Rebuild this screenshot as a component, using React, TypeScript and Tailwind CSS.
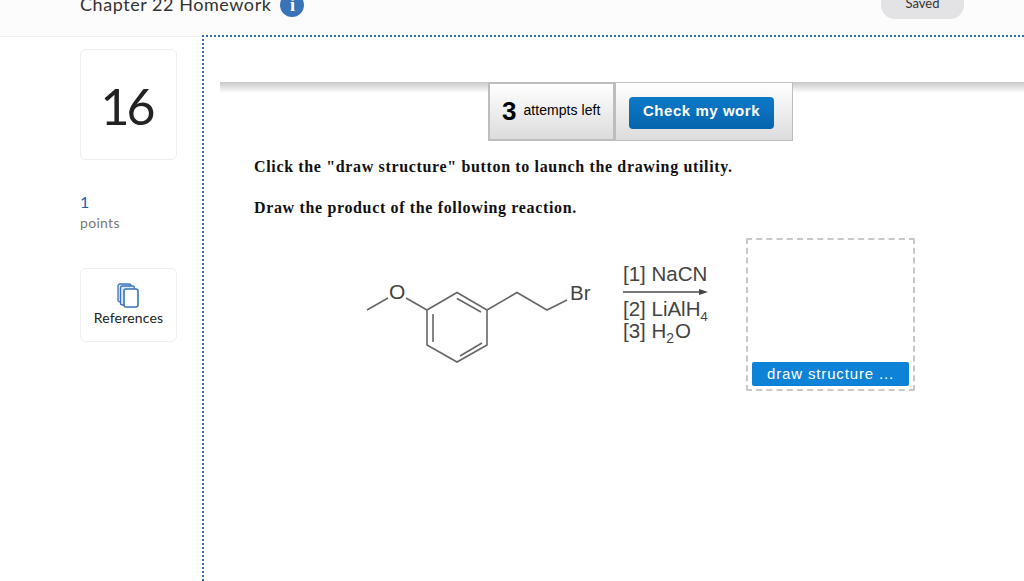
const sans = 'font-["Lato",sans-serif]';

function Scheme() {
  return (
    <svg width="360" height="160" viewBox="360 238 360 160" className="shrink-0" fontFamily="'Liberation Sans', Arial, sans-serif">
      <g fill="none" stroke="#666" strokeWidth="1.6">
        <path d="M367 310 L388 298" />
        <path d="M406 298 L427 310 L457 292.500 L487 310 L487 345 L457 362 L427 345 L427 310" />
        <path d="M487 310 L517 292.500 L547 310 L567 300" />
        <path d="M433 314 L433 342 M457 298.500 L481 312 M460 356 L482 343" />
      </g>
      <text x="389" y="299" fontSize="21" fill="#444">O</text>
      <text x="570" y="300" fontSize="20.500" fill="#444">Br</text>
      <g fontSize="20.500" fill="#444">
        <text x="623" y="281">[1] NaCN</text>
        <text x="623" y="316">[2] LiAlH<tspan fontSize="13" dy="5">4</tspan></text>
        <text x="623" y="338">[3] H<tspan fontSize="14" dy="5">2</tspan><tspan dx="1" dy="-5">O</tspan></text>
      </g>
      <path d="M623 292 L703 292" stroke="#777" strokeWidth="2" />
      <path d="M699 289 L708 292 L699 295 Z" fill="#444" />
    </svg>
  );
}

export default function App() {
  return (
    <div className="w-[1024px] h-[581px] overflow-hidden bg-white flex flex-col">
      {/* ---------- Header ---------- */}
      <header className="h-[37px] shrink-0 bg-[#fcfcfc] flex items-start justify-between pl-[80px] pr-[60px]">
        <div className="flex items-center gap-[9px] -mt-[7px]">
          <span className={`${sans} -mt-[2px] text-[18px] leading-[24px] text-[#333] tracking-[0.55px]`}>Chapter 22 Homework</span>
          <span className="w-[24px] h-[24px] rounded-full bg-[#3a74b8] text-white flex items-center justify-center font-['Liberation_Serif',serif] font-bold text-[18px] leading-none">i</span>
        </div>
        <div className="w-[83px] h-[19px] bg-[#e3e2e4] rounded-b-[14px] flex justify-center items-end pb-[8px]">
          <span className={`${sans} text-[13px] leading-[16px] text-[#333]`}>Saved</span>
        </div>
      </header>

      <div className="flex flex-1 min-h-0">
        {/* ---------- Sidebar ---------- */}
        <aside className="w-[202px] shrink-0 pl-[80px] pt-[12px] -mt-[1px] border-t border-[#eeeeee]">
          <div className="w-[97px] h-[111px] border border-[#eeeeee] rounded-[6px] flex items-center justify-center pr-[4px] pt-[2px]">
            <span className={`${sans} text-[50px] leading-none text-[#222] tracking-[-3px]`}>16</span>
          </div>
          <p className={`${sans} mt-[32px] text-[16px] leading-[20px] text-[#1d5fae]`}>1</p>
          <p className={`${sans} text-[14px] leading-[21px] text-[#777] tracking-[0.3px]`}>points</p>
          <div className="mt-[35px] w-[97px] h-[74px] border border-[#eeeeee] rounded-[6px] flex flex-col items-center pt-[14px]">
            <svg width="24" height="26" viewBox="0 0 24 26" fill="none" stroke="#3a74b8" strokeWidth="1.3">
              <rect x="1" y="1" width="13" height="18" rx="2" fill="#dce7f4" />
              <rect x="3.500" y="3" width="14" height="19" rx="2" fill="#dce7f4" />
              <rect x="7" y="6" width="14" height="18" rx="2" fill="#fff" strokeWidth="1.6" />
            </svg>
            <span className={`${sans} text-[14px] leading-[18px] text-[#222] tracking-[0.2px]`}>References</span>
          </div>
        </aside>

        {/* ---------- Question ---------- */}
        <main className="flex-1 min-w-0 border-l-2 border-t-2 border-dotted border-[#2f6db5] -mt-[2px] pl-[16px] pt-[45px]">
          <div className="flex pl-[268px] bg-[linear-gradient(#c8c8c8,#ffffff)] bg-no-repeat bg-[length:100%_11px]">
            <div className="w-[127px] h-[59px] border-2 border-[#bdbdbd] bg-[linear-gradient(#ffffff,#dcdcdc)] flex items-center pl-[12px] pb-[2px] gap-[7px] font-['Liberation_Sans',sans-serif] text-black">
              <span className="text-[26px] font-bold leading-none">3</span>
              <span className="text-[14px] tracking-[0.05px]">attempts left</span>
            </div>
            <div className="w-[178px] h-[59px] border border-[#bdbdbd] bg-[linear-gradient(#ffffff,#dcdcdc)] flex items-center pl-[13px] pt-[2px]">
              <button className="w-[145px] h-[32px] pb-[2px] rounded-[4px] bg-[linear-gradient(#0c79c8,#0565ac)] text-white text-[15px] font-semibold font-['Liberation_Sans',sans-serif] tracking-[0.55px]">
                Check my work
              </button>
            </div>
          </div>

          <div className="pl-[34px] font-['Liberation_Serif',serif] font-bold text-[16px] leading-[20px] text-[#111] tracking-[0.65px]">
            <p className="mt-[16px]">Click the "draw structure" button to launch the drawing utility.</p>
            <p className="mt-[21px]">Draw the product of the following reaction.</p>
          </div>

          <div className="flex items-start mt-[20px] pl-[140px]">
            <Scheme />
            <div className="ml-[26px] w-[169px] h-[153px] border-2 border-dashed border-[#c8c8c8] rounded-[2px] flex flex-col justify-end px-[4px] pb-[3px]">
              <button className="h-[24px] rounded-[2px] bg-[#0e82d6] text-white text-[15px] font-['Liberation_Sans',sans-serif] tracking-[0.85px]">
                draw structure ...
              </button>
            </div>
          </div>
        </main>
      </div>
    </div>
  );
}
